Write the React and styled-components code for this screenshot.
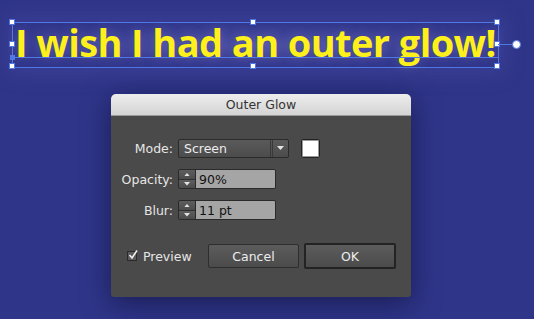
import React from 'react';
import styled, { createGlobalStyle } from 'styled-components';

const GlobalStyle = createGlobalStyle`
  html, body {
    margin: 0;
    padding: 0;
    background: #2f3589;
  }
`;

const Page = styled.div`
  width: 534px;
  height: 319px;
  overflow: hidden;
  background: #2f3589;
  font-family: 'DejaVu Sans', sans-serif;
`;

const Artboard = styled.div`
  height: 94px;
  box-sizing: border-box;
  padding: 22px 0 0 12px;
`;

const Selection = styled.div`
  position: relative;
  width: 487px;
  height: 46px;
  box-sizing: border-box;
  border: 1px solid #4f78e4;
  background: radial-gradient(ellipse at center, rgba(120, 120, 200, 0.35), rgba(80, 80, 170, 0.12) 70%, rgba(47, 53, 137, 0) 100%);
  box-shadow: 0 0 18px 6px rgba(80, 84, 170, 0.35);
`;

const Headline = styled.div`
  font-family: 'Open Sans', sans-serif;
  font-weight: 700;
  font-size: 38px;
  line-height: 38px;
  letter-spacing: -0.6px;
  color: #fdf01c;
  white-space: nowrap;
  padding-left: 2px;
  text-shadow: 0 0 1px #2f3380, 0 0 12px rgba(130, 130, 210, 0.45);
`;

const Guide = styled.div`
  position: absolute;
  left: 0;
  right: 0;
  top: ${p => p.$top}px;
  height: 1px;
  background: #4f78e4;
`;

const Handle = styled.div`
  position: absolute;
  width: 6px;
  height: 6px;
  box-sizing: border-box;
  background: #fff;
  border: 1px solid #4f78e4;
  left: ${p => p.$x}px;
  top: ${p => p.$y}px;
`;

const Anchor = styled.div`
  position: absolute;
  left: -3px;
  top: 32px;
  width: 5px;
  height: 5px;
  background: #4f78e4;
`;

const Port = styled.div`
  position: absolute;
  left: 485px;
  top: 21px;
  width: 14px;
  height: 1px;
  background: #4f78e4;
`;

const PortDot = styled.div`
  position: absolute;
  left: 499px;
  top: 17px;
  width: 9px;
  height: 9px;
  box-sizing: border-box;
  border-radius: 50%;
  background: #fff;
  border: 1px solid #4f78e4;
`;

const Dialog = styled.div`
  margin-left: 111px;
  width: 300px;
  height: 203px;
  border-radius: 5px 5px 3px 3px;
  background: #4a4a4a;
  box-shadow: 0 6px 28px rgba(10, 10, 40, 0.55);
  display: flex;
  flex-direction: column;
  overflow: hidden;
`;

const TitleBar = styled.div`
  height: 22px;
  flex-shrink: 0;
  background: linear-gradient(#ededed, #d4d4d4);
  border-bottom: 1px solid #9a9a9a;
  box-sizing: border-box;
  display: flex;
  align-items: center;
  justify-content: center;
  font-size: 12.5px;
  color: #333;
`;

const Body = styled.div`
  padding-top: 22px;
  display: flex;
  flex-direction: column;
`;

const Row = styled.div`
  display: flex;
  align-items: center;
  height: 20px;
  margin-bottom: ${p => p.$gap}px;
`;

const Label = styled.label`
  width: 62px;
  margin-right: 5px;
  text-align: right;
  font-size: 12.5px;
  color: #e6e6e6;
  white-space: nowrap;
`;

const Select = styled.div`
  width: 111px;
  height: 19px;
  box-sizing: border-box;
  border: 1px solid #2b2b2b;
  border-radius: 2px;
  background: linear-gradient(#5a5a5a, #4c4c4c);
  display: flex;
  align-items: center;
  font-size: 12.5px;
  color: #ececec;
`;

const SelectValue = styled.span`
  flex: 1;
  padding-left: 5px;
`;

const SelectArrow = styled.span`
  width: 15px;
  height: 100%;
  border-left: 3px double #393939;
  display: flex;
  align-items: center;
  justify-content: center;
`;

const Swatch = styled.div`
  margin-left: 12px;
  width: 19px;
  height: 19px;
  box-sizing: border-box;
  border: 1px solid #222;
  border-radius: 2px;
  background: #fff;
  box-shadow: inset 0 0 0 1px #9a9a9a;
`;

const Field = styled.div`
  display: flex;
  height: 20px;
  box-sizing: border-box;
  border: 1px solid #2a2a2a;
  border-radius: 2px;
  overflow: hidden;
`;

const Spinner = styled.div`
  width: 16px;
  border-right: 1px solid #2a2a2a;
  display: flex;
  flex-direction: column;
`;

const SpinHalf = styled.div`
  flex: 1;
  background: linear-gradient(#5e5e5e, #4c4c4c);
  display: flex;
  align-items: center;
  justify-content: center;
  border-bottom: ${p => (p.$top ? '1px solid #2e2e2e' : 'none')};
`;

const Input = styled.div`
  width: 76px;
  background: #a5a5a5;
  font-size: 12.5px;
  color: #111;
  padding-left: 3px;
  display: flex;
  align-items: center;
`;

const Footer = styled.div`
  display: flex;
  align-items: center;
  margin-top: 23px;
  padding-left: 16px;
`;

const Check = styled.label`
  display: flex;
  align-items: center;
  gap: 6px;
  font-size: 12.5px;
  color: #e6e6e6;
  width: 81px;
`;

const Box = styled.span`
  width: 10px;
  height: 10px;
  box-sizing: border-box;
  border: 1px solid #2a2a2a;
  background: #5a5a5a;
  position: relative;
`;

const Tick = styled.svg`
  position: absolute;
  left: 0;
  top: -2px;
`;

const Button = styled.button`
  width: ${p => (p.$default ? 92 : 91)}px;
  height: ${p => (p.$default ? 26 : 24)}px;
  margin-left: ${p => p.$ml}px;
  box-sizing: border-box;
  border: ${p => (p.$default ? '2px solid #232323' : '1px solid #2e2e2e')};
  border-radius: 2px;
  background: linear-gradient(#5c5c5c, #4b4b4b);
  color: #ededed;
  font-family: 'DejaVu Sans', sans-serif;
  font-size: 12.5px;
  padding: 0;
`;

const Arrow = ({ up, size = 7 }) => (
  <svg width={size} height={size / 2 + 0.5} viewBox="0 0 7 4">
    <path d={up ? 'M0 4 L3.5 0 L7 4 Z' : 'M0 0 L3.5 4 L7 0 Z'} fill="#e4e4e4" />
  </svg>
);

const Stepper = ({ value }) => (
  <Field>
    <Spinner>
      <SpinHalf $top>
        <Arrow up size={6} />
      </SpinHalf>
      <SpinHalf>
        <Arrow size={6} />
      </SpinHalf>
    </Spinner>
    <Input>{value}</Input>
  </Field>
);

export default function App() {
  return (
    <Page>
      <GlobalStyle />
      <Artboard>
        <Selection>
          <Headline>I wish I had an outer glow!</Headline>
          <Guide $top={34} />
          <Handle $x={-4} $y={-4} />
          <Handle $x={237} $y={-4} />
          <Handle $x={481} $y={-4} />
          <Handle $x={-4} $y={18} />
          <Handle $x={481} $y={18} />
          <Handle $x={-4} $y={40} />
          <Handle $x={237} $y={40} />
          <Handle $x={481} $y={40} />
          <Anchor />
          <Port />
          <PortDot />
        </Selection>
      </Artboard>
      <Dialog>
        <TitleBar>Outer Glow</TitleBar>
        <Body>
          <Row $gap={11}>
            <Label>Mode:</Label>
            <Select>
              <SelectValue>Screen</SelectValue>
              <SelectArrow>
                <Arrow />
              </SelectArrow>
            </Select>
            <Swatch />
          </Row>
          <Row $gap={11}>
            <Label>Opacity:</Label>
            <Stepper value="90%" />
          </Row>
          <Row $gap={0}>
            <Label>Blur:</Label>
            <Stepper value="11 pt" />
          </Row>
          <Footer>
            <Check>
              <Box>
                <Tick width="10" height="10" viewBox="0 0 10 10">
                  <path d="M1.5 5 L4 8 L9 0.5" stroke="#f0f0f0" strokeWidth="1.6" fill="none" />
                </Tick>
              </Box>
              Preview
            </Check>
            <Button $ml={0}>Cancel</Button>
            <Button $default $ml={5}>OK</Button>
          </Footer>
        </Body>
      </Dialog>
    </Page>
  );
}
